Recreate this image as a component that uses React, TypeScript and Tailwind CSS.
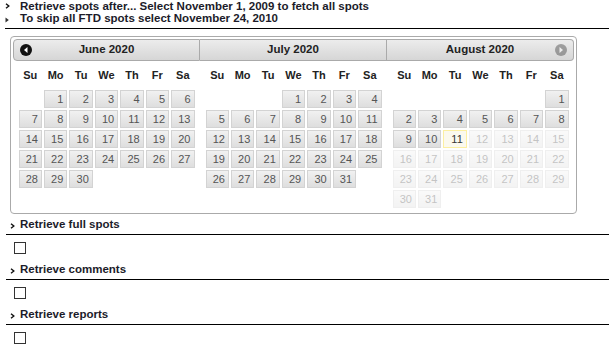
import React from "react";

type Month = { name: string; start: number; days: number; highlight?: number; disabledFrom?: number };

const months: Month[] = [
  { name: "June 2020", start: 1, days: 30 },
  { name: "July 2020", start: 3, days: 31 },
  { name: "August 2020", start: 6, days: 31, highlight: 11, disabledFrom: 12 },
];

const dayNames = ["Su", "Mo", "Tu", "We", "Th", "Fr", "Sa"];

function Chevron({ className }: { className?: string }) {
  return (
    <svg width="5" height="6" viewBox="0 0 5 6" className={className}>
      <polyline points="1,0.8 3.8,3 1,5.2" fill="none" stroke="#111" strokeWidth="1.4" />
    </svg>
  );
}

function CircleIcon({ dir, disabled }: { dir: "w" | "e"; disabled?: boolean }) {
  return (
    <svg width="12" height="12" viewBox="0 0 12 12" className={disabled ? "opacity-40" : ""}>
      <circle cx="6" cy="6" r="6" fill={disabled ? "#333" : "#111"} />
      {dir === "w" ? (
        <polygon points="7.5,3 7.5,9 4,6" fill="#fff" />
      ) : (
        <polygon points="4.5,3 4.5,9 8,6" fill="#fff" />
      )}
    </svg>
  );
}

function MonthGroup({ month, index }: { month: Month; index: number }) {
  const cells: (number | null)[] = [];
  for (let i = 0; i < month.start; i++) cells.push(null);
  for (let d = 1; d <= month.days; d++) cells.push(d);

  const headerShape =
    index === 0
      ? "rounded-l-[4px] border"
      : index === 2
      ? "rounded-r-[4px] border border-l-0"
      : "border border-l-0";

  return (
    <div className="w-[187px]">
      <div
        className={`relative h-[22px] border-[#aaaaaa] bg-linear-to-b from-[#ececec] to-[#d6d6d6] flex items-center justify-center font-bold text-[11.5px] text-[#222] ${headerShape}`}
      >
        {index === 0 && (
          <span className="absolute left-[6px] top-[4px] flex">
            <CircleIcon dir="w" />
          </span>
        )}
        {index === 2 && (
          <span className="absolute right-[6px] top-[4px] flex">
            <CircleIcon dir="e" disabled />
          </span>
        )}
        {month.name}
      </div>
      <div className="w-[178px] mx-auto mb-[2px]">
        <div className="grid grid-cols-7 h-[28px] items-center text-center font-bold text-[11px] text-[#222]">
          {dayNames.map((d) => (
            <div key={d}>{d}</div>
          ))}
        </div>
        <div className="grid grid-cols-7 auto-rows-[20px] h-[120px]">
          {cells.map((d, i) => {
            if (d === null) return <div key={i} />;
            const isHi = d === month.highlight;
            const isOff = month.disabledFrom !== undefined && d >= month.disabledFrom;
            let cls = "border-[#d3d3d3] bg-linear-to-b from-[#f1f1f1] to-[#dedede] text-[#555]";
            if (isHi) cls = "border-[#fcefa1] bg-[#fbf9ee] text-[#363636]";
            if (isOff) cls = "border-[#d3d3d3] bg-linear-to-b from-[#f1f1f1] to-[#dedede] text-[#555] opacity-35";
            return (
              <div key={i} className="p-[1px]">
                <div className={`h-[18px] border text-right pr-[3px] text-[11px] leading-[16px] ${cls}`}>{d}</div>
              </div>
            );
          })}
        </div>
      </div>
    </div>
  );
}

function Section({ label }: { label: string }) {
  return (
    <div>
      <div className="h-[18px] flex items-center">
        <Chevron className="ml-[10px] mt-[2px]" />
        <span className="ml-[5px] font-bold text-[11.5px] text-[#1c1c2a]">{label}</span>
      </div>
      <div className="ml-[6px] border-t border-black" />
      <div className="h-[26px] flex items-center pl-[14px]">
        <div className="w-[12px] h-[12px] border border-[#333] bg-white" />
      </div>
    </div>
  );
}

export default function App() {
  return (
    <div className="w-[609px] h-[351px] overflow-hidden bg-white font-['Liberation_Sans',Arial,sans-serif] text-[#1c1c2a]">
      <div className="ml-[5px] border-b border-black pb-[4px] font-bold text-[11.5px] leading-[12px]">
        <div className="flex items-start h-[12px]">
          <Chevron className="mt-[3px]" />
          <span className="ml-[10px]">Retrieve spots after... Select November 1, 2009 to fetch all spots</span>
        </div>
        <div className="flex items-start h-[12px]">
          <svg width="5" height="6" viewBox="0 0 5 6" className="mt-[5px]">
            <polygon points="0.5,0.5 3.8,3 0.5,5.5" fill="#333" />
          </svg>
          <span className="ml-[10px]">To skip all FTD spots select November 24, 2010</span>
        </div>
      </div>

      <div className="mt-[7px] ml-[10px] w-[567px] border border-[#aaaaaa] rounded-[4px] p-[2px] flex">
        {months.map((m, i) => (
          <MonthGroup key={m.name} month={m} index={i} />
        ))}
      </div>

      <div className="mt-[2px]">
        <Section label="Retrieve full spots" />
        <Section label="Retrieve comments" />
        <Section label="Retrieve reports" />
      </div>
    </div>
  );
}
